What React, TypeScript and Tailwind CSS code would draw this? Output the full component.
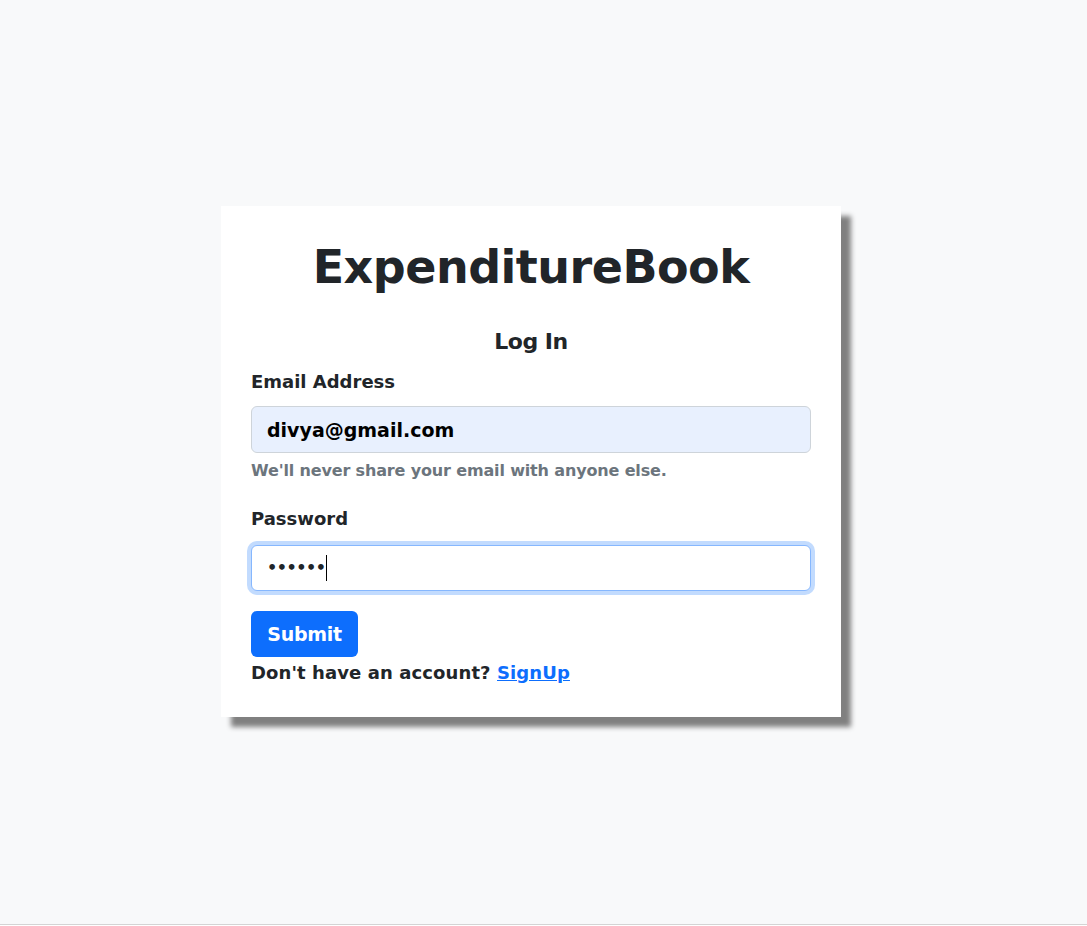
const font = { fontFamily: '"DejaVu Sans", "Noto Sans", sans-serif' };

export default function App() {
  return (
    <div className="h-[925px] border-b border-[#d4d4d4] bg-[#f8f9fa] pt-[206px] pl-[221px]" style={font}>
      <div className="w-[620px] bg-white px-[30px] pt-[32px] pb-[29px] shadow-[10px_10px_5px_#808080]">
        <h1 className="text-center text-[46px] leading-[58px] font-bold tracking-[-0.5px] text-[#212529]">
          ExpenditureBook
        </h1>
        <h2 className="mt-[31px] text-center text-[22px] leading-[29px] font-bold tracking-[-0.5px] text-[#212529]">
          Log In
        </h2>
        <form className="mt-[11px]" onSubmit={(e) => e.preventDefault()}>
          <label className="block text-[18px] leading-[30px] font-bold text-[#212529]">
            Email Address
          </label>
          <input
            type="email"
            defaultValue="divya@gmail.com"
            className="mt-[9px] block h-[47px] w-full rounded-[6px] border border-[#ced4da] bg-[#e8f0fe] px-[15px] text-[19px] font-bold text-black outline-none"
          />
          <div className="mt-[6px] text-[16px] leading-[24px] font-bold tracking-[-0.15px] text-[#6c757d]">
            We'll never share your email with anyone else.
          </div>
          <label className="mt-[21px] block text-[18px] leading-[30px] font-bold text-[#212529]">
            Password
          </label>
          <div className="mt-[11px] flex h-[46px] w-full items-center rounded-[6px] border border-[#86b7fe] bg-white px-[15px] shadow-[0_0_0_4px_rgba(13,110,253,0.25)]">
            <span className="text-[16px] font-bold tracking-[-0.5px] text-[#212529]">••••••</span>
            <span className="ml-[1px] h-[26px] w-px bg-black" />
          </div>
          <button
            type="submit"
            className="mt-[20px] h-[46px] w-[107px] rounded-[6px] bg-[#0d6efd] text-[19px] font-bold tracking-[-0.3px] text-white"
          >
            Submit
          </button>
          <p className="mt-[1px] text-[18px] leading-[30px] font-bold tracking-[0.1px] text-[#212529]">
            Don't have an account?{' '}
            <a href="#" className="text-[#0d6efd] underline">
              SignUp
            </a>
          </p>
        </form>
      </div>
    </div>
  );
}
